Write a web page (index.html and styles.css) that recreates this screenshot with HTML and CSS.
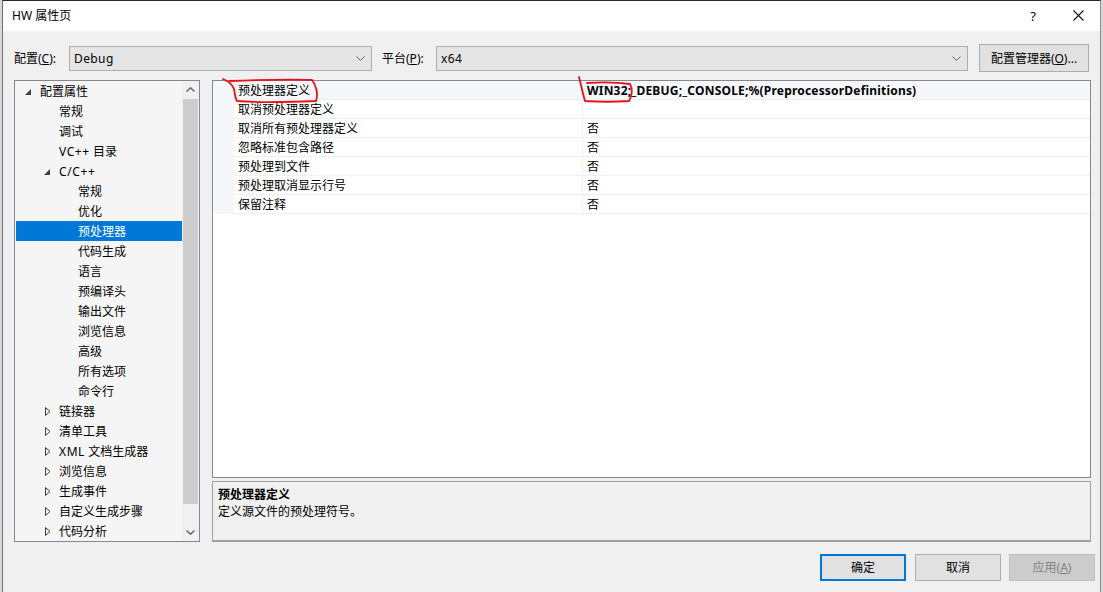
FILE: index.html
```html
<!DOCTYPE html>
<html lang="zh-CN">
<head>
    <meta charset="UTF-8">
    <title>HW 属性页</title>
    <link rel="stylesheet" href="styles.css">
</head>
<body>

<div class="dialog">
    <div class="titlebar">
        <span class="title">HW 属性页</span>
        <span class="tb-help">?</span>
        <span class="tb-close">
            <svg width="11" height="11" viewBox="0 0 11 11"><path d="M0.5 0.5 L10.5 10.5 M10.5 0.5 L0.5 10.5" stroke="#111" stroke-width="1.1" fill="none"/></svg>
        </span>
    </div>

    <div class="content">
        <div class="config-row">
            <label class="lbl lbl-config">配置(<u>C</u>):</label>
            <div class="combo combo-config">
                <span class="combo-text">Debug</span>
                <svg class="chev" width="9" height="5" viewBox="0 0 9 5"><path d="M0.5 0.5 L4.5 4.5 L8.5 0.5" stroke="#606060" fill="none"/></svg>
            </div>
            <label class="lbl lbl-platform">平台(<u>P</u>):</label>
            <div class="combo combo-platform">
                <span class="combo-text">x64</span>
                <svg class="chev" width="9" height="5" viewBox="0 0 9 5"><path d="M0.5 0.5 L4.5 4.5 L8.5 0.5" stroke="#606060" fill="none"/></svg>
            </div>
            <button class="btn btn-manager">配置管理器(<u>O</u>)...</button>
        </div>

        <div class="main">
            <div class="tree">
                <ul class="tree-list">
                    <li class="node lvl0"><span class="twisty"><svg class="tw-open" width="6" height="6" viewBox="0 0 6 6"><polygon points="6,0 6,6 0,6" fill="#404040"/></svg></span>配置属性</li>
                    <li class="node lvl1"><span class="twisty"></span>常规</li>
                    <li class="node lvl1"><span class="twisty"></span>调试</li>
                    <li class="node lvl1"><span class="twisty"></span><span class="latin">VC++</span>&nbsp;目录</li>
                    <li class="node lvl1"><span class="twisty"><svg class="tw-open" width="6" height="6" viewBox="0 0 6 6"><polygon points="6,0 6,6 0,6" fill="#404040"/></svg></span><span class="latin">C/C++</span></li>
                    <li class="node lvl2"><span class="twisty"></span>常规</li>
                    <li class="node lvl2"><span class="twisty"></span>优化</li>
                    <li class="node lvl2 selected"><span class="twisty"></span>预处理器</li>
                    <li class="node lvl2"><span class="twisty"></span>代码生成</li>
                    <li class="node lvl2"><span class="twisty"></span>语言</li>
                    <li class="node lvl2"><span class="twisty"></span>预编译头</li>
                    <li class="node lvl2"><span class="twisty"></span>输出文件</li>
                    <li class="node lvl2"><span class="twisty"></span>浏览信息</li>
                    <li class="node lvl2"><span class="twisty"></span>高级</li>
                    <li class="node lvl2"><span class="twisty"></span>所有选项</li>
                    <li class="node lvl2"><span class="twisty"></span>命令行</li>
                    <li class="node lvl1"><span class="twisty"><svg class="tw-closed" width="6" height="9" viewBox="0 0 6 9"><polygon points="0.5,0.5 5,4.5 0.5,8.5" fill="none" stroke="#404040"/></svg></span>链接器</li>
                    <li class="node lvl1"><span class="twisty"><svg class="tw-closed" width="6" height="9" viewBox="0 0 6 9"><polygon points="0.5,0.5 5,4.5 0.5,8.5" fill="none" stroke="#404040"/></svg></span>清单工具</li>
                    <li class="node lvl1"><span class="twisty"><svg class="tw-closed" width="6" height="9" viewBox="0 0 6 9"><polygon points="0.5,0.5 5,4.5 0.5,8.5" fill="none" stroke="#404040"/></svg></span><span class="latin">XML</span>&nbsp;文档生成器</li>
                    <li class="node lvl1"><span class="twisty"><svg class="tw-closed" width="6" height="9" viewBox="0 0 6 9"><polygon points="0.5,0.5 5,4.5 0.5,8.5" fill="none" stroke="#404040"/></svg></span>浏览信息</li>
                    <li class="node lvl1"><span class="twisty"><svg class="tw-closed" width="6" height="9" viewBox="0 0 6 9"><polygon points="0.5,0.5 5,4.5 0.5,8.5" fill="none" stroke="#404040"/></svg></span>生成事件</li>
                    <li class="node lvl1"><span class="twisty"><svg class="tw-closed" width="6" height="9" viewBox="0 0 6 9"><polygon points="0.5,0.5 5,4.5 0.5,8.5" fill="none" stroke="#404040"/></svg></span>自定义生成步骤</li>
                    <li class="node lvl1"><span class="twisty"><svg class="tw-closed" width="6" height="9" viewBox="0 0 6 9"><polygon points="0.5,0.5 5,4.5 0.5,8.5" fill="none" stroke="#404040"/></svg></span>代码分析</li>
                </ul>
                <div class="vscroll">
                    <div class="sb-arrow">
                        <svg width="9" height="5" viewBox="0 0 9 5"><path d="M0.5 4.5 L4.5 0.8 L8.5 4.5" stroke="#606060" stroke-width="1.4" fill="none"/></svg>
                    </div>
                    <div class="sb-track"><div class="sb-thumb"></div></div>
                    <div class="sb-arrow">
                        <svg width="9" height="5" viewBox="0 0 9 5"><path d="M0.5 0.5 L4.5 4.2 L8.5 0.5" stroke="#606060" stroke-width="1.4" fill="none"/></svg>
                    </div>
                </div>
            </div>

            <div class="right">
                <div class="grid">
                    <div class="prop current">
                        <span class="gutter"></span>
                        <span class="pname">预处理器定义</span>
                        <span class="pvalue bold">WIN32;_DEBUG;_CONSOLE;%(PreprocessorDefinitions)</span>
                    </div>
                    <div class="prop">
                        <span class="gutter"></span>
                        <span class="pname">取消预处理器定义</span>
                        <span class="pvalue"></span>
                    </div>
                    <div class="prop">
                        <span class="gutter"></span>
                        <span class="pname">取消所有预处理器定义</span>
                        <span class="pvalue">否</span>
                    </div>
                    <div class="prop">
                        <span class="gutter"></span>
                        <span class="pname">忽略标准包含路径</span>
                        <span class="pvalue">否</span>
                    </div>
                    <div class="prop">
                        <span class="gutter"></span>
                        <span class="pname">预处理到文件</span>
                        <span class="pvalue">否</span>
                    </div>
                    <div class="prop">
                        <span class="gutter"></span>
                        <span class="pname">预处理取消显示行号</span>
                        <span class="pvalue">否</span>
                    </div>
                    <div class="prop">
                        <span class="gutter"></span>
                        <span class="pname">保留注释</span>
                        <span class="pvalue">否</span>
                    </div>
                </div>
                <div class="desc">
                    <div class="desc-title">预处理器定义</div>
                    <div class="desc-text">定义源文件的预处理符号。</div>
                </div>
            </div>
        </div>

        <div class="buttons">
            <button class="btn btn-ok">确定</button>
            <button class="btn">取消</button>
            <button class="btn btn-disabled">应用(<u>A</u>)</button>
        </div>
    </div>

    <!-- red pen marks drawn over the grid -->
    <svg class="marks" width="1098" height="120" viewBox="2 0 1098 120">
        <path d="M223,79 C228,81 232,84 234,89 C235,94 235,98 237,101 C262,103 290,102 316,101 C318,95 317,86 312,80 C290,79 255,80 230,81"
              stroke="#e8101a" stroke-width="1.8" fill="none" stroke-linecap="round"/>
        <path d="M579,77 C581,85 583,94 585,101 C600,102 615,102 629,101 C632,96 633,89 630,84 C616,82 601,82 587,83"
              stroke="#e8101a" stroke-width="1.8" fill="none" stroke-linecap="round"/>
    </svg>
</div>

</body>
</html>
```

FILE: styles.css
```css
* {
    box-sizing: border-box;
}

body {
    margin: 0;
    padding: 0;
    background-color: #d8d8d8;
    font-family: "Noto Sans", "Noto Sans CJK SC", sans-serif;
    font-size: 12px;
    color: #000;
    overflow: hidden;
}

u {
    text-decoration: underline;
    text-underline-offset: 1px;
}

.latin {
    letter-spacing: 0.6px;
}

.dialog {
    position: relative;
    margin-left: 2px;
    width: 1099px;
    height: 600px;
    background-color: #f0f0f0;
    border-top: 1px solid #2b2b2b;
    border-left: 1px solid #6e6e6e;
    border-right: 1px solid #8a8a8a;
}

/* title bar */
.titlebar {
    display: flex;
    align-items: center;
    height: 30px;
    background: #fff;
    padding-left: 9px;
}

.title {
    flex: 1;
    line-height: 16px;
    margin-top: -1px;
}

.tb-help {
    width: 14px;
    text-align: center;
    font-size: 13px;
    margin-right: 33px;
    margin-top: -1px;
}

.tb-close {
    display: flex;
    margin-right: 16px;
    margin-top: -1px;
}

/* content */
.content {
    padding: 13px 9px 0 11px;
}

.config-row {
    display: flex;
    align-items: center;
    height: 28px;
}

.lbl {
    line-height: 16px;
    padding-top: 1px;
}

.lbl-config {
    width: 55px;
}

.lbl-platform {
    width: 54px;
    margin-left: 10px;
}

.combo {
    display: flex;
    align-items: center;
    height: 25px;
    background: #e5e5e5;
    border: 1px solid #adadad;
    padding: 0 6px 0 4px;
}

.combo-text {
    flex: 1;
    line-height: 16px;
    padding-top: 1px;
    letter-spacing: 0.4px;
}

.combo-config {
    width: 303px;
}

.combo-platform {
    width: 532px;
}

.btn {
    font-family: inherit;
    font-size: 12px;
    color: #000;
    background: #e1e1e1;
    border: 1px solid #adadad;
    padding: 1px 0 0 0;
    height: 27px;
    width: 86px;
    line-height: 16px;
}

.btn-manager {
    margin-left: 11px;
    width: 110px;
    height: 28px;
    margin-right: 1px;
}

/* main area */
.main {
    display: flex;
    gap: 12px;
    margin-top: 8px;
    height: 462px;
}

.tree {
    display: flex;
    width: 186px;
    border: 1px solid #828790;
    background: #f5f5f5;
}

.tree-list {
    list-style: none;
    margin: 0;
    padding: 0 0 0 1px;
    flex: 1;
    overflow: hidden;
}

.node {
    display: flex;
    align-items: center;
    height: 20px;
    padding-top: 1px;
    line-height: 16px;
    white-space: nowrap;
}

.node.selected {
    background: #0078d7;
    color: #fff;
}

.twisty {
    display: flex;
    align-items: center;
    width: 19px;
    height: 19px;
    flex-shrink: 0;
}

.lvl0 {
    padding-left: 5px;
}

.lvl1 {
    padding-left: 24px;
}

.lvl2 {
    padding-left: 43px;
}

.tw-open {
    margin-left: 4px;
    margin-top: 1px;
}

.tw-closed {
    margin-left: 5px;
}

.vscroll {
    display: flex;
    flex-direction: column;
    width: 17px;
    background: #f0f0f0;
}

.sb-arrow {
    display: flex;
    align-items: center;
    justify-content: center;
    height: 17px;
}

.sb-track {
    flex: 1;
    padding: 1px 1px 20px 1px;
}

.sb-thumb {
    height: 100%;
    background: #cdcdcd;
}

.right {
    flex: 1;
    display: flex;
    flex-direction: column;
    gap: 3px;
}

.grid {
    height: 398px;
    background: #fff;
    border: 1px solid #828790;
}

.prop {
    display: flex;
    height: 19px;
    line-height: 16px;
}

.gutter {
    width: 21px;
    background: #f5f7fb;
    flex-shrink: 0;
}

.pname {
    width: 349px;
    padding: 2px 0 0 4px;
    border-right: 1px solid #eef0f3;
    border-bottom: 1px solid #eef0f3;
}

.pvalue {
    flex: 1;
    padding: 2px 0 0 4px;
    border-bottom: 1px solid #eef0f3;
}

.prop.current .pname,
.prop.current .pvalue {
    background: #f5f7fb;
}

.bold {
    font-weight: bold;
    letter-spacing: 0.19px;
}

.desc {
    height: 61px;
    background: #f0f0f0;
    border: 1px solid #a0a0a0;
    border-bottom-width: 2px;
    padding: 4px 0 0 5px;
    line-height: 17px;
}

.desc-title {
    font-weight: bold;
}

/* bottom buttons */
.buttons {
    display: flex;
    justify-content: flex-end;
    gap: 8px;
    margin-top: 12px;
    margin-right: -4px;
}

.btn-ok {
    border: 2px solid #0078d7;
    margin-right: 1px;
}

.btn-disabled {
    background: #cccccc;
    border-color: #bfbfbf;
    color: #838383;
}

/* red pen annotations */
.marks {
    position: absolute;
    left: -1px;
    top: -1px;
    pointer-events: none;
}
```
